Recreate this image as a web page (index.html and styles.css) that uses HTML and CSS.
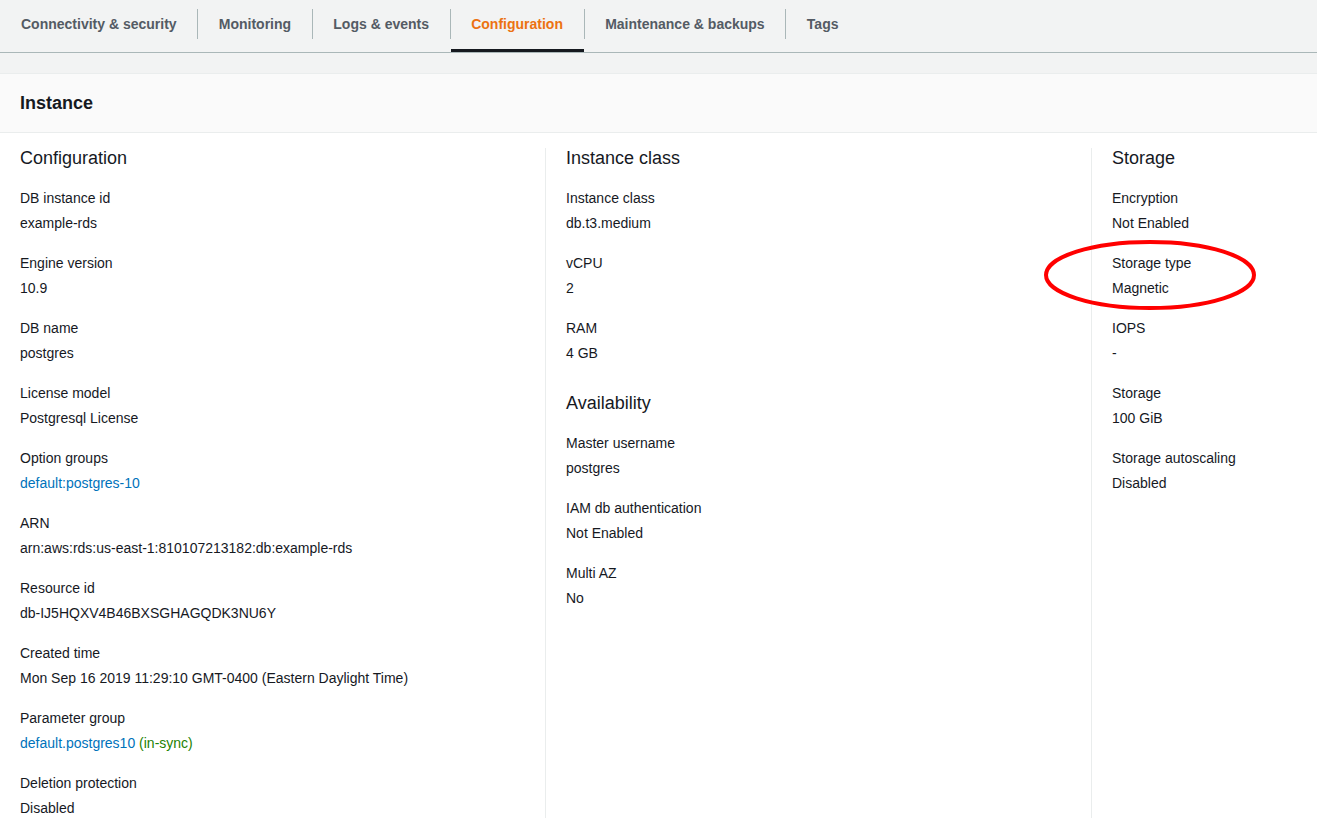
FILE: index.html
```html
<!DOCTYPE html>
<html>
<head>
<meta charset="utf-8">
<title>Configuration</title>
<link rel="stylesheet" href="styles.css">
</head>
<body>
<div class="page">
  <nav class="tabs">
    <div class="tab">Connectivity &amp; security</div>
    <div class="sep"></div>
    <div class="tab">Monitoring</div>
    <div class="sep"></div>
    <div class="tab">Logs &amp; events</div>
    <div class="sep"></div>
    <div class="tab active">Configuration</div>
    <div class="sep"></div>
    <div class="tab">Maintenance &amp; backups</div>
    <div class="sep"></div>
    <div class="tab">Tags</div>
  </nav>

  <section class="panel">
    <header class="panel-header"><h2>Instance</h2></header>
    <div class="panel-body">
      <div class="col">
        <h3>Configuration</h3>
        <div class="item"><div class="label">DB instance id</div><div class="value">example-rds</div></div>
        <div class="item"><div class="label">Engine version</div><div class="value">10.9</div></div>
        <div class="item"><div class="label">DB name</div><div class="value">postgres</div></div>
        <div class="item"><div class="label">License model</div><div class="value">Postgresql License</div></div>
        <div class="item"><div class="label">Option groups</div><div class="value"><a class="link" href="#">default:postgres-10</a></div></div>
        <div class="item"><div class="label">ARN</div><div class="value">arn:aws:rds:us-east-1:810107213182:db:example-rds</div></div>
        <div class="item"><div class="label">Resource id</div><div class="value">db-IJ5HQXV4B46BXSGHAGQDK3NU6Y</div></div>
        <div class="item"><div class="label">Created time</div><div class="value">Mon Sep 16 2019 11:29:10 GMT-0400 (Eastern Daylight Time)</div></div>
        <div class="item"><div class="label">Parameter group</div><div class="value"><a class="link" href="#">default.postgres10</a> <span class="ok">(in-sync)</span></div></div>
        <div class="item"><div class="label">Deletion protection</div><div class="value">Disabled</div></div>
      </div>
      <div class="col">
        <h3>Instance class</h3>
        <div class="item"><div class="label">Instance class</div><div class="value">db.t3.medium</div></div>
        <div class="item"><div class="label">vCPU</div><div class="value">2</div></div>
        <div class="item"><div class="label">RAM</div><div class="value">4 GB</div></div>
        <h3 class="sub">Availability</h3>
        <div class="item"><div class="label">Master username</div><div class="value">postgres</div></div>
        <div class="item"><div class="label">IAM db authentication</div><div class="value">Not Enabled</div></div>
        <div class="item"><div class="label">Multi AZ</div><div class="value">No</div></div>
      </div>
      <div class="col">
        <h3>Storage</h3>
        <div class="item"><div class="label">Encryption</div><div class="value">Not Enabled</div></div>
        <div class="item"><div class="label">Storage type</div><div class="value">Magnetic</div></div>
        <div class="item"><div class="label">IOPS</div><div class="value">-</div></div>
        <div class="item"><div class="label">Storage</div><div class="value">100 GiB</div></div>
        <div class="item"><div class="label">Storage autoscaling</div><div class="value">Disabled</div></div>
      </div>
    </div>
  </section>

  <svg class="annotation" width="216" height="74" viewBox="0 0 216 74" aria-hidden="true">
    <ellipse cx="108" cy="36" rx="104" ry="33" fill="none" stroke="#ff0000" stroke-width="4"/>
  </svg>
</div>
</body>
</html>
```
FILE: styles.css
```css
html, body {
  margin: 0;
  padding: 0;
}
body {
  background: #f2f3f3;
  font-family: "Liberation Sans", Arial, sans-serif;
  font-size: 14px;
  color: #16191f;
  overflow: hidden;
}
.page {
  position: relative;
  min-height: 827px;
}

/* Tabs */
.tabs {
  display: flex;
  height: 52px;
  border-bottom: 1px solid #aab7b8;
  background: #f2f3f3;
}
.tab {
  box-sizing: border-box;
  height: 52px;
  padding: 0 20.6px 5px 20.6px;
  display: flex;
  align-items: center;
  font-weight: 700;
  font-size: 14px;
  color: #545b64;
  white-space: nowrap;
}
.tab:first-child {
  padding-left: 21px;
}
.tab.active {
  color: #ec7211;
  box-shadow: inset 0 -3px 0 #16191f;
}
.sep {
  width: 1px;
  height: 30px;
  margin-top: 9px;
  background: #aab7b8;
  flex: none;
}

/* Panel */
.panel {
  margin-top: 20px;
  background: #ffffff;
  border-top: 1px solid #eaeded;
  overflow: hidden;
}
.panel-header {
  background: #fafafa;
  border-bottom: 1px solid #eaeded;
  padding: 18px 20px;
}
.panel-header h2 {
  margin: 0;
  font-size: 18px;
  line-height: 22px;
  font-weight: 700;
  color: #16191f;
}
.panel-body {
  display: grid;
  grid-template-columns: 545px 546px 546px;
  padding-top: 15px;
  padding-bottom: 20px;
}
.col {
  padding: 0 20px;
  min-width: 0;
}
.col + .col {
  border-left: 1px solid #eaeded;
}
.col h3 {
  margin: 0 0 20px 0;
  font-size: 18px;
  line-height: 20px;
  font-weight: 400;
  color: #16191f;
}
.col h3.sub {
  margin-top: 30px;
}
.item {
  margin-bottom: 20px;
}
.item:last-child {
  margin-bottom: 0;
}
.label {
  line-height: 20px;
  margin-bottom: 5px;
  color: #16191f;
}
.value {
  line-height: 20px;
  color: #16191f;
}
.link {
  color: #0073bb;
  text-decoration: none;
}
.ok {
  color: #1d8102;
}

/* Red hand-drawn annotation over the content */
.annotation {
  position: absolute;
  left: 1042px;
  top: 239px;
}
```
